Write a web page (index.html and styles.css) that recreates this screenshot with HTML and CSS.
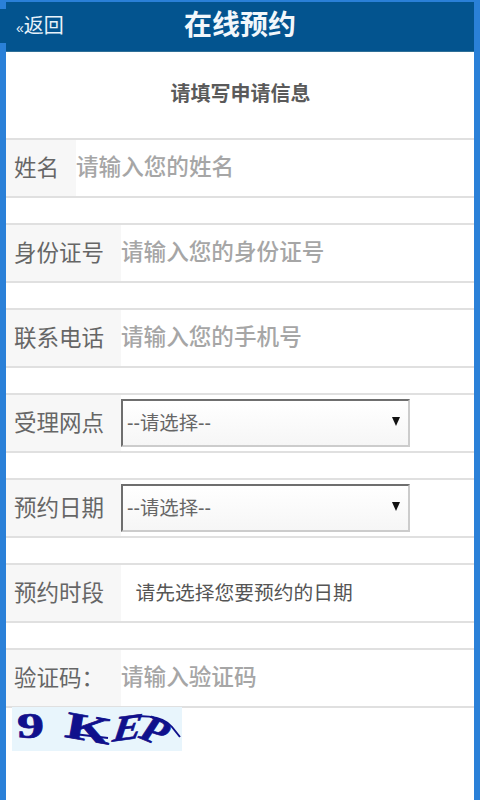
FILE: index.html
```html
<!DOCTYPE html>
<html lang="zh-CN">
<head>
<meta charset="utf-8">
<title>在线预约</title>
<link rel="stylesheet" href="styles.css">
</head>
<body>
<div class="page">
  <header class="topbar">
    <a class="back" href="#"><span class="chev">«</span>返回</a>
    <h1 class="title">在线预约</h1>
  </header>
  <h2 class="subtitle">请填写申请信息</h2>
  <form class="form">
    <div class="row"><label class="label label-short">姓名</label><input class="field" placeholder="请输入您的姓名"></div>
    <div class="row"><label class="label">身份证号</label><input class="field" placeholder="请输入您的身份证号"></div>
    <div class="row"><label class="label">联系电话</label><input class="field" placeholder="请输入您的手机号"></div>
    <div class="row"><label class="label">受理网点</label><div class="select-wrap"><select class="select"><option>--请选择--</option></select></div></div>
    <div class="row"><label class="label">预约日期</label><div class="select-wrap"><select class="select"><option>--请选择--</option></select></div></div>
    <div class="row"><label class="label">预约时段</label><span class="hint">请先选择您要预约的日期</span></div>
    <div class="row row-last"><label class="label">验证码：</label><input class="field" placeholder="请输入验证码"></div>
  </form>
  <div class="captcha">
    <span class="c c9">9</span><span class="c ck">K</span><span class="c ce">E</span><span class="c cp">P</span>
    <svg class="noise" width="170" height="44" viewBox="0 0 170 44"><path d="M62 27 L96 31 M112 12 C125 8 150 7 160 20 L168 30" fill="none" stroke="#10108c" stroke-width="2"/></svg>
  </div>
</div>
</body>
</html>
```
FILE: styles.css
```css
* { box-sizing: border-box; }
html, body { margin: 0; height: 800px; overflow: hidden; }
body {
  background: #2a80d8;
  padding: 2px 6px 0;
  font-family: "Liberation Sans", "Noto Sans CJK SC", sans-serif;
  color: #666;
}
.page { background: #fff; height: 798px; }
.topbar {
  height: 50px;
  background: #03548f;
  border-bottom: 1px solid #2f6f97;
  display: flex;
  align-items: center;
  justify-content: center;
  position: relative;
}
.back {
  position: absolute;
  left: -6px;
  top: 7px;
  height: 34px;
  width: 80px;
  padding-left: 16px;
  background: #03548f;
  color: #e8f2fa;
  font-size: 20px;
  line-height: 34px;
  text-decoration: none;
  white-space: nowrap;
}
.chev { font-size: 14px; }
.title { margin: 0 0 2px; color: #f2f7fb; font-size: 28px; font-weight: 700; line-height: 40px; }
.subtitle {
  margin: 0;
  height: 86px;
  display: flex;
  align-items: center;
  justify-content: center;
  padding-bottom: 6px;
  padding-left: 1px;
  font-size: 20px;
  font-weight: 700;
  color: #5a5a5a;
}
.form { display: flex; flex-direction: column; gap: 25px; }
.row {
  height: 60px;
  display: flex;
  align-items: center;
  border-top: 2px solid #e0e0e0;
  border-bottom: 2px solid #e0e0e0;
  background: #fff;
}
.label {
  width: 115px;
  height: 100%;
  flex: none;
  background: #f7f7f7;
  padding-left: 8px;
  font-size: 22.5px;
  line-height: 58px;
  color: #666;
}
.label-short { width: 70px; }
.field {
  flex: 1;
  min-width: 0;
  height: 100%;
  border: 0;
  outline: 0;
  padding: 0;
  background: transparent;
  font: inherit;
  font-size: 22.6px;
  font-weight: 500;
}
.field::placeholder { color: #a6a6a6; opacity: 1; }
.select-wrap { position: relative; width: 289px; height: 48px; }
.select-wrap::after {
  content: "";
  position: absolute;
  right: 10px;
  top: 18px;
  border-left: 4px solid transparent;
  border-right: 4px solid transparent;
  border-top: 9px solid #111;
}
.select {
  appearance: none;
  -webkit-appearance: none;
  width: 100%;
  height: 100%;
  border: 2px solid #ccc;
  border-top-color: #6e6e6e;
  border-left-color: #6e6e6e;
  border-radius: 0;
  outline: 0;
  padding: 0 0 0 4px;
  background: linear-gradient(#fff, #f6f6f6);
  font: inherit;
  font-size: 19.4px;
  color: #666;
}
.hint { padding-left: 14.5px; margin-bottom: 3px; font-size: 19.75px; color: #555; }
.captcha {
  width: 170px;
  height: 44px;
  margin: -1px 0 0 6px;
  background: #e8f5fc;
  position: relative;
  font-family: "Liberation Serif", serif;
  font-weight: 700;
  color: #10108c;
}
.c { position: absolute; line-height: 1; -webkit-text-stroke: 0.7px #10108c; transform-origin: left center; }
.c9 { left: 5px; top: 1px; font-size: 36px; transform: scaleX(1.5); }
.ck { left: 54px; top: -2px; font-size: 38px; transform: rotate(10deg) scaleX(1.55); }
.ce { left: 103px; top: 3px; font-size: 38px; transform: skewX(-25deg) rotate(-8deg); }
.cp { left: 132px; top: 0; font-size: 38px; transform: rotate(22deg) scaleX(1.1) skewX(-10deg); }
.noise { position: absolute; left: 0; top: 0; }
```
